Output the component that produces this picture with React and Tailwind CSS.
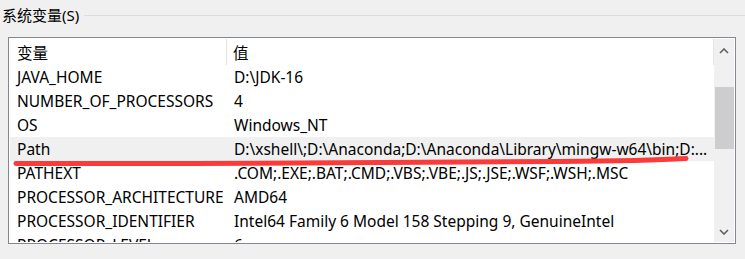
const ROWS = [
  { name: 'JAVA_HOME', value: 'D:\\JDK-16' },
  { name: 'NUMBER_OF_PROCESSORS', value: '4' },
  { name: 'OS', value: 'Windows_NT' },
  { name: 'Path', value: 'D:\\xshell\\;D:\\Anaconda;D:\\Anaconda\\Library\\mingw-w64\\bin;D:...', selected: true },
  { name: 'PATHEXT', value: '.COM;.EXE;.BAT;.CMD;.VBS;.VBE;.JS;.JSE;.WSF;.WSH;.MSC' },
  { name: 'PROCESSOR_ARCHITECTURE', value: 'AMD64' },
  { name: 'PROCESSOR_IDENTIFIER', value: 'Intel64 Family 6 Model 158 Stepping 9, GenuineIntel' },
  { name: 'PROCESSOR_LEVEL', value: '6' },
]

export default function App() {
  return (
    <div
      className="relative w-[745px] h-[259px] overflow-hidden bg-[#f0f0f0] text-black text-[15.5px]"
      style={{ fontFamily: '"Noto Sans", "Noto Sans CJK SC", sans-serif' }}
    >
      {/* Group title */}
      <div className="flex items-center h-[30px] pl-[2px]">
        <span className="leading-none text-[15px]">系统变量(S)</span>
        <div className="flex-1 ml-[5px] h-px bg-[#dcdcdc]" />
      </div>

      {/* List panel */}
      <div className="mt-[7px] ml-[8px] w-[728px] h-[207px] border border-[#828790] bg-white p-px flex">
        <div className="w-[705px] overflow-hidden">
          {/* Header */}
          <div className="flex h-[26px] items-center">
            <div className="w-[217px] h-full pl-[7px] pt-[3px] flex items-center border-r border-[#e5e5e5]">变量</div>
            <div className="flex-1 h-full pl-[6px] pt-[3px] flex items-center border-r border-[#e5e5e5]">值</div>
          </div>
          {/* Rows */}
          {ROWS.map((row) => (
            <div
              key={row.name}
              className={`flex h-[24px] pt-[2px] items-center whitespace-nowrap ${row.selected ? 'bg-[#f0f0f0]' : ''}`}
            >
              <div className="w-[218px] pl-[7px]">{row.name}</div>
              <div className="flex-1 pl-[6px]">{row.value}</div>
            </div>
          ))}
        </div>

        {/* Scrollbar */}
        <div className="w-[20px] bg-[#f0f0f0] flex flex-col items-center">
          <div className="h-[23px] w-full flex items-center justify-center">
            <svg width="10" height="6" viewBox="0 0 10 6">
              <path d="M1 5 L5 1 L9 5" fill="none" stroke="#606060" strokeWidth="1.6" />
            </svg>
          </div>
          <div className="mt-[25px] h-[62px] w-[19px] bg-[#cdcdcd]" />
          <div className="flex-1" />
          <div className="h-[20px] w-full flex items-center justify-center">
            <svg width="10" height="6" viewBox="0 0 10 6">
              <path d="M1 1 L5 5 L9 1" fill="none" stroke="#606060" strokeWidth="1.6" />
            </svg>
          </div>
        </div>
      </div>

      {/* Red hand-drawn underline */}
      <svg className="absolute left-0 top-0 pointer-events-none" width="745" height="259">
        <path
          d="M16 163.5 C 200 164, 420 163, 560 161.5 C 620 161, 660 160, 686 158.5"
          fill="none"
          stroke="#fb3a3a"
          strokeWidth="5"
          strokeLinecap="round"
        />
      </svg>
    </div>
  )
}
